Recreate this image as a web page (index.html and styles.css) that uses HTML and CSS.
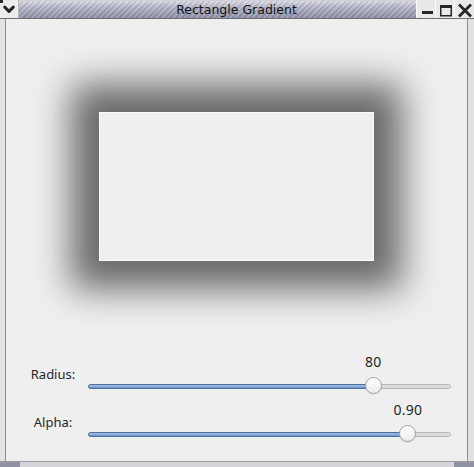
FILE: index.html
```html
<!DOCTYPE html>
<html>
<head>
<meta charset="utf-8">
<link rel="stylesheet" href="styles.css">
</head>
<body>
<div class="win">
  <div class="titlebar">
    <div class="tb-menu">
      <svg width="19" height="18" viewBox="0 0 19 18"><path d="M5 7 L9.5 11.5 L14 7" fill="none" stroke="#262626" stroke-width="3.2" stroke-linecap="round" stroke-linejoin="round"/></svg>
    </div>
    <div class="tb-title">Rectangle Gradient</div>
    <div class="tb-btn">
      <svg width="19" height="18" viewBox="0 0 19 18"><rect x="5" y="11" width="11" height="3" fill="#262626"/></svg>
    </div>
    <div class="tb-btn">
      <svg width="19" height="18" viewBox="0 0 19 18"><rect x="4.75" y="5.75" width="10.5" height="10" fill="none" stroke="#262626" stroke-width="1.5"/><rect x="4" y="5" width="12" height="3" fill="#262626"/></svg>
    </div>
    <div class="tb-btn last">
      <svg width="20" height="18" viewBox="0 0 20 18"><path d="M5 5.5 L15 15.5 M15 5.5 L5 15.5" stroke="#262626" stroke-width="2.8" stroke-linecap="square"/></svg>
    </div>
  </div>
  <div class="middle">
    <div class="frame-l"></div>
    <div class="content">
      <div class="canvas">
        <div class="rect"></div>
      </div>
      <div class="controls">
        <div class="lbl">Radius:</div>
        <div class="slider" style="--p:0.8">
          <div class="val-row"><span class="val">80</span></div>
          <div class="track">
            <div class="groove"><div class="fill"></div></div>
            <div class="handle"></div>
          </div>
        </div>
        <div class="lbl">Alpha:</div>
        <div class="slider" style="--p:0.9">
          <div class="val-row"><span class="val">0.90</span></div>
          <div class="track">
            <div class="groove"><div class="fill"></div></div>
            <div class="handle"></div>
          </div>
        </div>
      </div>
    </div>
    <div class="frame-r"></div>
  </div>
  <div class="frame-b">
    <div class="corner"></div>
    <div class="bmid"></div>
    <div class="corner"></div>
  </div>
</div>
</body>
</html>
```

FILE: styles.css
```css
* { box-sizing: border-box; }
html, body { margin: 0; padding: 0; }
body { width: 474px; height: 467px; overflow: hidden; background: #e6e6e6; }

.win {
  width: 474px;
  height: 467px;
  display: flex;
  flex-direction: column;
  background: #e4e4e4;
}

.titlebar {
  height: 19px;
  display: flex;
  flex: none;
  background: #e8e8e8;
  border-bottom: 1px solid #6e6e78;
}
.tb-menu {
  width: 19px;
  height: 18px;
  background: #ececec;
  border-right: 1px solid #b8b8c0;
  display: flex;
  align-items: center;
  justify-content: center;
  position: relative;
}
.tb-menu::before {
  content: "";
  position: absolute;
  left: 0;
  top: 0;
  width: 3px;
  height: 3px;
  background: #2a2a2a;
}
.tb-title {
  flex: 1;
  height: 18px;
  padding-left: 38px;
  text-align: center;
  font-family: "DejaVu Sans", sans-serif;
  font-size: 12.5px;
  line-height: 18px;
  color: #141418;
  border-top: 1px solid #d0d0d8;
  background:
    repeating-linear-gradient(135deg, rgba(255,255,255,0.12) 0 2px, rgba(0,0,0,0.07) 2px 4px),
    linear-gradient(#dcdce4 0%, #babbcc 30%, #a2a4b9 65%, #8e90a8 100%);
}
.tb-btn {
  width: 19px;
  height: 18px;
  background: #e9e9e9;
  border-left: 1px solid #fafafa;
}
.tb-btn svg { display: block; }
.tb-btn.last { width: 20px; }

.middle {
  flex: 1;
  display: flex;
  min-height: 0;
}
.frame-l {
  width: 6px;
  background: #e2e2e2;
  border-right: 1px solid #8e8e8e;
}
.frame-r {
  width: 7px;
  background: #e2e2e2;
  border-left: 1px solid #8e8e8e;
}
.content {
  flex: 1;
  background: #efefef;
  display: flex;
  flex-direction: column;
  overflow: hidden;
}

.canvas {
  flex: 1;
  display: flex;
  justify-content: center;
  padding-top: 93px;
}
.rect {
  width: 275px;
  height: 149px;
  background: #efefef;
  border: 1px solid #fbfbfb;
  box-shadow: 0 0 34px 28px rgba(0,0,0,0.56);
}

.controls {
  display: grid;
  grid-template-columns: 70px 1fr;
  grid-auto-rows: 48px;
  padding: 0 16px 12px 12px;
  font-family: "Noto Sans", sans-serif;
  font-size: 13px;
  color: #262626;
}
.lbl {
  align-self: center;
  text-align: center;
  line-height: 18px;
  margin-bottom: 7px;
}
.slider {
  display: flex;
  flex-direction: column;
}
.val-row {
  height: 18px;
  position: relative;
  line-height: 18px;
}
.val {
  position: absolute;
  top: 0;
  left: calc(var(--p) * (100% - 17px) + 8.5px);
  transform: translateX(-50%);
  white-space: nowrap;
  font-size: 14px;
  letter-spacing: 0.3px;
}
.track {
  height: 30px;
  position: relative;
  display: flex;
  align-items: center;
}
.groove {
  width: 100%;
  height: 5px;
  border: 1px solid #b9b9b9;
  border-radius: 3px;
  background: #dadada;
  position: relative;
}
.fill {
  position: absolute;
  left: -1px;
  top: -1px;
  height: 5px;
  width: calc(var(--p) * (100% - 17px) + 10px);
  border: 1px solid #4a6c9e;
  border-radius: 3px;
  background: linear-gradient(#a3c0e8, #6f96cc);
}
.handle {
  position: absolute;
  top: 6px;
  left: calc(var(--p) * (100% - 17px));
  width: 17px;
  height: 17px;
  border-radius: 50%;
  border: 1px solid #a2a2a2;
  background: linear-gradient(#ffffff, #ececec);
  box-shadow: 0 1px 1px rgba(0,0,0,0.08);
}

.frame-b {
  height: 6px;
  flex: none;
  display: flex;
  border-top: 1px solid #9a9a9a;
  background: #d6d6da;
}
.corner {
  width: 20px;
  background: #8f91a4;
}
.bmid { flex: 1; }
```
